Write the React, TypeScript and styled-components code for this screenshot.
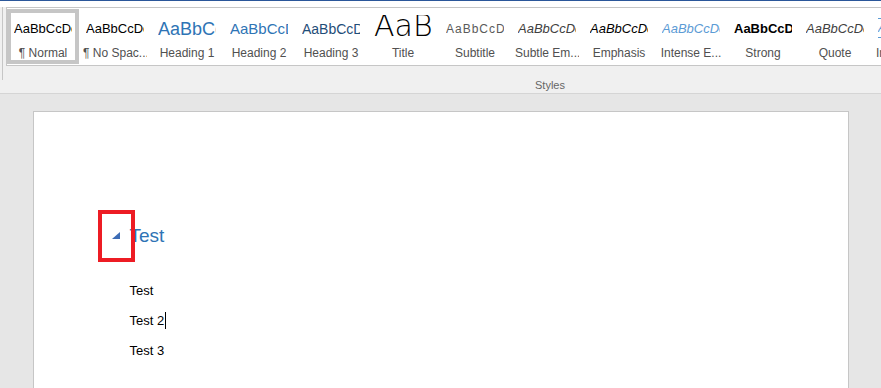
import React from "react";
import styled, { createGlobalStyle } from "styled-components";

interface StyleSample {
  name: string;
  sample: string;
  size: number;
  color: string;
  base?: number;
  italic?: boolean;
  bold?: boolean;
  light?: boolean;
  spacing?: number;
  framed?: boolean;
  selected?: boolean;
}

const GlobalStyle = createGlobalStyle`
  html, body {
    margin: 0;
    height: 100%;
    overflow: hidden;
    background: #e6e6e6;
    font-family: "Liberation Sans", Arial, sans-serif;
  }
`;

const Ribbon = styled.div`
  display: flex;
  height: 92px;
  border-top: 1px solid #2b579a;
  border-bottom: 1px solid #d5d5d5;
  background: linear-gradient(#ffffff 0 6px, #f0f0f0 6px);
  overflow: hidden;
`;

const Separator = styled.div`
  flex-shrink: 0;
  width: 1px;
  height: 73px;
  margin: 6px 0 0 2px;
  background: #c6c6c6;
`;

const StylesGroup = styled.div`
  flex-shrink: 0;
  display: flex;
  flex-direction: column;
  width: 1088px;
  margin-left: 3px;
`;

const Gallery = styled.div`
  display: flex;
  height: 56px;
  margin-top: 6px;
  padding-top: 1px;
  border: 1px solid #c6c6c6;
  border-right: none;
  background: #ffffff;
`;

const Item = styled.div<{ $selected?: boolean }>`
  flex-shrink: 0;
  display: flex;
  flex-direction: column;
  box-sizing: border-box;
  width: 72px;
  height: 55px;
  border: 4px solid ${(p) => (p.$selected ? "#c6c6c6" : "transparent")};
`;

const Preview = styled.div`
  width: 58px;
  height: 29px;
  margin: 2px 0 0 3px;
  overflow: hidden;
  white-space: nowrap;
`;

const Sample = styled.span<{
  $size: number;
  $color: string;
  $base: number;
  $italic?: boolean;
  $bold?: boolean;
  $light?: boolean;
  $spacing?: number;
  $framed?: boolean;
}>`
  display: block;
  font-family: ${(p) =>
    p.$light ? '"DejaVu Sans", "Liberation Sans", sans-serif' : "inherit"};
  font-size: ${(p) => p.$size}px;
  line-height: ${(p) =>
    p.$framed ? "18px" : `${2 * (p.$base - 0.3465 * p.$size)}px`};
  color: ${(p) => p.$color};
  font-style: ${(p) => (p.$italic ? "italic" : "normal")};
  font-weight: ${(p) => (p.$bold ? 700 : p.$light ? 200 : 400)};
  letter-spacing: ${(p) => p.$spacing || 0}px;
  ${(p) =>
    p.$framed &&
    `
    margin-top: 3px;
    border-top: 1px solid #5b9bd5;
    border-bottom: 1px solid #5b9bd5;
  `}
`;

const Label = styled.div`
  height: 14px;
  margin-top: 3px;
  font-size: 12px;
  line-height: 14px;
  color: #505050;
  text-align: center;
  white-space: nowrap;
  overflow: hidden;
`;

const GroupLabel = styled.div`
  margin-top: 12px;
  font-size: 11px;
  line-height: 14px;
  color: #666666;
  text-align: center;
`;

const DocArea = styled.div`
  padding-top: 17px;
  background: #e6e6e6;
`;

const Page = styled.div`
  position: relative;
  box-sizing: border-box;
  width: 816px;
  min-height: 320px;
  margin: 0 auto;
  padding: 96px 96px 0;
  background: #ffffff;
  border: 1px solid #c6c6c6;
  border-bottom: none;
`;

const Heading = styled.div`
  position: relative;
  margin-top: 15px;
  font-size: 19px;
  line-height: 26px;
  color: #2e74b5;
`;

const CollapseArrow = styled.svg`
  position: absolute;
  left: -18px;
  top: 9px;
`;

const Body = styled.div`
  margin-top: 27px;
`;

const Para = styled.div`
  height: 30px;
  font-size: 13px;
  line-height: 30px;
  color: #000000;
`;

const Caret = styled.span`
  display: inline-block;
  width: 1px;
  height: 17px;
  margin-left: 1px;
  vertical-align: -4px;
  background: #000000;
`;

const Highlight = styled.div`
  position: absolute;
  left: 64px;
  top: 98px;
  box-sizing: border-box;
  width: 37px;
  height: 52px;
  border: 4px solid #ed1c24;
`;

const samples: StyleSample[] = [
  { name: "¶ Normal", sample: "AaBbCcDc", size: 13, color: "#000", selected: true },
  { name: "¶ No Spac...", sample: "AaBbCcDc", size: 13, color: "#000" },
  { name: "Heading 1", sample: "AaBbCc", size: 18, color: "#2e74b5", base: 21 },
  { name: "Heading 2", sample: "AaBbCcD", size: 15, color: "#2e74b5" },
  { name: "Heading 3", sample: "AaBbCcD", size: 14, color: "#1f4d78" },
  { name: "Title", sample: "AaB", size: 30, color: "#000", base: 21, light: true },
  { name: "Subtitle", sample: "AaBbCcD", size: 12, color: "#5a5a5a", spacing: 1 },
  { name: "Subtle Em...", sample: "AaBbCcDc", size: 13, color: "#404040", italic: true },
  { name: "Emphasis", sample: "AaBbCcDc", size: 13, color: "#000", italic: true },
  { name: "Intense E...", sample: "AaBbCcDc", size: 13, color: "#5b9bd5", italic: true },
  { name: "Strong", sample: "AaBbCcDc", size: 13, color: "#000", bold: true },
  { name: "Quote", sample: "AaBbCcDc", size: 13, color: "#404040", italic: true },
  { name: "Intense Q...", sample: "AaBbCcDc", size: 13, color: "#5b9bd5", italic: true, framed: true },
];

export default function App() {
  return (
    <>
      <GlobalStyle />
      <Ribbon>
        <Separator />
        <StylesGroup>
          <Gallery>
            {samples.map((s) => (
              <Item key={s.name} $selected={s.selected}>
                <Preview>
                  <Sample
                    $size={s.size}
                    $color={s.color}
                    $base={s.base ?? 19}
                    $italic={s.italic}
                    $bold={s.bold}
                    $light={s.light}
                    $spacing={s.spacing}
                    $framed={s.framed}
                  >
                    {s.sample}
                  </Sample>
                </Preview>
                <Label>{s.name}</Label>
              </Item>
            ))}
          </Gallery>
          <GroupLabel>Styles</GroupLabel>
        </StylesGroup>
      </Ribbon>
      <DocArea>
        <Page>
          <Heading>
            <CollapseArrow width="8" height="7" viewBox="0 0 8 7">
              <polygon points="8,0 8,7 0,7" fill="#3d6cb5" />
            </CollapseArrow>
            Test
          </Heading>
          <Body>
            <Para>Test</Para>
            <Para>
              Test 2<Caret />
            </Para>
            <Para>Test 3</Para>
          </Body>
          <Highlight />
        </Page>
      </DocArea>
    </>
  );
}
